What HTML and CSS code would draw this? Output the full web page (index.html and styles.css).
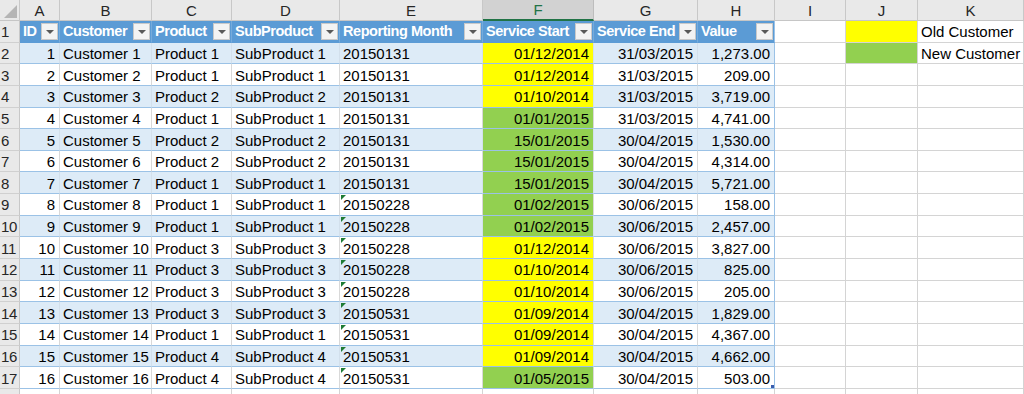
FILE: index.html
```html
<!DOCTYPE html>
<html>
<head>
<meta charset="utf-8">
<link rel="stylesheet" href="styles.css">
</head>
<body>
<div class="sheet">
  <div class="row colhdr">
    <div class="corner"></div>
    <div class="ch">A</div><div class="ch">B</div><div class="ch">C</div><div class="ch">D</div><div class="ch">E</div>
    <div class="ch sel">F</div><div class="ch">G</div><div class="ch">H</div><div class="ch">I</div><div class="ch">J</div><div class="ch">K</div>
  </div>

  <div class="row">
    <div class="rh">1</div>
    <div class="th">ID<span class="fb"></span></div>
    <div class="th">Customer<span class="fb"></span></div>
    <div class="th">Product<span class="fb"></span></div>
    <div class="th">SubProduct<span class="fb"></span></div>
    <div class="th">Reporting Month<span class="fb"></span></div>
    <div class="th">Service Start<span class="fb"></span></div>
    <div class="th">Service End<span class="fb"></span></div>
    <div class="th th-end">Value<span class="fb"></span></div>
    <div class="c"></div><div class="c yellow"></div><div class="c">Old Customer</div>
  </div>

  <div class="row band">
    <div class="rh">2</div>
    <div class="t r">1</div><div class="t">Customer 1</div><div class="t">Product 1</div><div class="t">SubProduct 1</div><div class="t">20150131</div>
    <div class="t r yellow">01/12/2014</div><div class="t r">31/03/2015</div><div class="t r t-end">1,273.00</div>
    <div class="c"></div><div class="c green"></div><div class="c">New Customer</div>
  </div>
  <div class="row">
    <div class="rh">3</div>
    <div class="t r">2</div><div class="t">Customer 2</div><div class="t">Product 1</div><div class="t">SubProduct 1</div><div class="t">20150131</div>
    <div class="t r yellow">01/12/2014</div><div class="t r">31/03/2015</div><div class="t r t-end">209.00</div>
    <div class="c"></div><div class="c"></div><div class="c"></div>
  </div>
  <div class="row band">
    <div class="rh">4</div>
    <div class="t r">3</div><div class="t">Customer 3</div><div class="t">Product 2</div><div class="t">SubProduct 2</div><div class="t">20150131</div>
    <div class="t r yellow">01/10/2014</div><div class="t r">31/03/2015</div><div class="t r t-end">3,719.00</div>
    <div class="c"></div><div class="c"></div><div class="c"></div>
  </div>
  <div class="row">
    <div class="rh">5</div>
    <div class="t r">4</div><div class="t">Customer 4</div><div class="t">Product 1</div><div class="t">SubProduct 1</div><div class="t">20150131</div>
    <div class="t r green">01/01/2015</div><div class="t r">31/03/2015</div><div class="t r t-end">4,741.00</div>
    <div class="c"></div><div class="c"></div><div class="c"></div>
  </div>
  <div class="row band">
    <div class="rh">6</div>
    <div class="t r">5</div><div class="t">Customer 5</div><div class="t">Product 2</div><div class="t">SubProduct 2</div><div class="t">20150131</div>
    <div class="t r green">15/01/2015</div><div class="t r">30/04/2015</div><div class="t r t-end">1,530.00</div>
    <div class="c"></div><div class="c"></div><div class="c"></div>
  </div>
  <div class="row">
    <div class="rh">7</div>
    <div class="t r">6</div><div class="t">Customer 6</div><div class="t">Product 2</div><div class="t">SubProduct 2</div><div class="t">20150131</div>
    <div class="t r green">15/01/2015</div><div class="t r">30/04/2015</div><div class="t r t-end">4,314.00</div>
    <div class="c"></div><div class="c"></div><div class="c"></div>
  </div>
  <div class="row band">
    <div class="rh">8</div>
    <div class="t r">7</div><div class="t">Customer 7</div><div class="t">Product 1</div><div class="t">SubProduct 1</div><div class="t">20150131</div>
    <div class="t r green">15/01/2015</div><div class="t r">30/04/2015</div><div class="t r t-end">5,721.00</div>
    <div class="c"></div><div class="c"></div><div class="c"></div>
  </div>
  <div class="row">
    <div class="rh">9</div>
    <div class="t r">8</div><div class="t">Customer 8</div><div class="t">Product 1</div><div class="t">SubProduct 1</div><div class="t txt">20150228</div>
    <div class="t r green">01/02/2015</div><div class="t r">30/06/2015</div><div class="t r t-end">158.00</div>
    <div class="c"></div><div class="c"></div><div class="c"></div>
  </div>
  <div class="row band">
    <div class="rh">10</div>
    <div class="t r">9</div><div class="t">Customer 9</div><div class="t">Product 1</div><div class="t">SubProduct 1</div><div class="t txt">20150228</div>
    <div class="t r green">01/02/2015</div><div class="t r">30/06/2015</div><div class="t r t-end">2,457.00</div>
    <div class="c"></div><div class="c"></div><div class="c"></div>
  </div>
  <div class="row">
    <div class="rh">11</div>
    <div class="t r">10</div><div class="t">Customer 10</div><div class="t">Product 3</div><div class="t">SubProduct 3</div><div class="t txt">20150228</div>
    <div class="t r yellow">01/12/2014</div><div class="t r">30/06/2015</div><div class="t r t-end">3,827.00</div>
    <div class="c"></div><div class="c"></div><div class="c"></div>
  </div>
  <div class="row band">
    <div class="rh">12</div>
    <div class="t r">11</div><div class="t">Customer 11</div><div class="t">Product 3</div><div class="t">SubProduct 3</div><div class="t txt">20150228</div>
    <div class="t r yellow">01/10/2014</div><div class="t r">30/06/2015</div><div class="t r t-end">825.00</div>
    <div class="c"></div><div class="c"></div><div class="c"></div>
  </div>
  <div class="row">
    <div class="rh">13</div>
    <div class="t r">12</div><div class="t">Customer 12</div><div class="t">Product 3</div><div class="t">SubProduct 3</div><div class="t txt">20150228</div>
    <div class="t r yellow">01/10/2014</div><div class="t r">30/06/2015</div><div class="t r t-end">205.00</div>
    <div class="c"></div><div class="c"></div><div class="c"></div>
  </div>
  <div class="row band">
    <div class="rh">14</div>
    <div class="t r">13</div><div class="t">Customer 13</div><div class="t">Product 3</div><div class="t">SubProduct 3</div><div class="t txt">20150531</div>
    <div class="t r yellow">01/09/2014</div><div class="t r">30/04/2015</div><div class="t r t-end">1,829.00</div>
    <div class="c"></div><div class="c"></div><div class="c"></div>
  </div>
  <div class="row">
    <div class="rh">15</div>
    <div class="t r">14</div><div class="t">Customer 14</div><div class="t">Product 1</div><div class="t">SubProduct 1</div><div class="t txt">20150531</div>
    <div class="t r yellow">01/09/2014</div><div class="t r">30/04/2015</div><div class="t r t-end">4,367.00</div>
    <div class="c"></div><div class="c"></div><div class="c"></div>
  </div>
  <div class="row band">
    <div class="rh">16</div>
    <div class="t r">15</div><div class="t">Customer 15</div><div class="t">Product 4</div><div class="t">SubProduct 4</div><div class="t txt">20150531</div>
    <div class="t r yellow">01/09/2014</div><div class="t r">30/04/2015</div><div class="t r t-end">4,662.00</div>
    <div class="c"></div><div class="c"></div><div class="c"></div>
  </div>
  <div class="row last">
    <div class="rh">17</div>
    <div class="t r">16</div><div class="t">Customer 16</div><div class="t">Product 4</div><div class="t">SubProduct 4</div><div class="t txt">20150531</div>
    <div class="t r green">01/05/2015</div><div class="t r">30/04/2015</div><div class="t r t-end handle">503.00</div>
    <div class="c"></div><div class="c"></div><div class="c"></div>
  </div>
  <div class="row">
    <div class="rh">18</div>
    <div class="c"></div><div class="c"></div><div class="c"></div><div class="c"></div><div class="c"></div>
    <div class="c"></div><div class="c"></div><div class="c"></div><div class="c"></div><div class="c"></div><div class="c"></div>
  </div>
</div>
</body>
</html>
```

FILE: styles.css
```css
* { box-sizing: border-box; }
html, body {
  margin: 0;
  padding: 0;
  background: #ffffff;
  overflow: hidden;
}
body {
  font-family: "Liberation Sans", Arial, sans-serif;
  font-size: 15px;
  color: #000;
  width: 1024px;
  height: 394px;
}
.sheet {
  display: flex;
  flex-direction: column;
}
.row {
  display: grid;
  grid-template-columns: 20px 40px 92px 80px 108px 143px 111px 104px 77px 71px 72px 1fr;
  height: 21.65px;
}
.row > div {
  border-right: 1px solid #d4d4d4;
  border-bottom: 1px solid #d4d4d4;
  white-space: nowrap;
  overflow: hidden;
  display: flex;
  align-items: center;
  padding: 1px 3px 0 3px;
}

/* column headers */
.colhdr { height: 21px; }
.colhdr > div {
  background: #e9e9e9;
  border-right: 1px solid #c8c8c8;
  border-bottom: 1px solid #c6c6c6;
  justify-content: center;
  color: #262626;
  font-size: 15px;
  padding: 0;
}
.colhdr > .corner {
  position: relative;
  background: #e9e9e9;
}
.corner::after {
  content: "";
  position: absolute;
  right: 2px;
  bottom: 2px;
  width: 0;
  height: 0;
  border-left: 13px solid transparent;
  border-bottom: 13px solid #b5b5b5;
}
.colhdr > .sel {
  background: #d2d2d2;
  color: #217346;
  border-bottom: 2px solid #217346;
  border-right-color: #bdbdbd;
}

/* row headers */
.row > .rh {
  background: #e9e9e9;
  border-right: 1px solid #c8c8c8;
  border-bottom: 1px solid #d0d0d0;
  color: #262626;
  padding: 1px 0 0 1px;
  overflow: visible;
  letter-spacing: -0.3px;
}

/* table header */
.row > .th {
  background: #5b9bd5;
  color: #ffffff;
  font-weight: bold;
  font-size: 14.5px;
  letter-spacing: -0.45px;
  border-right: 1px solid #76abdb;
  border-bottom: 1px solid #5b9bd5;
  padding: 0 1px 0 3px;
}
.row > .th-end { border-right-color: #9bc2e6; }
.fb {
  margin-left: auto;
  flex: none;
  width: 17px;
  height: 17px;
  background: #f3f3f3;
  border: 1px solid #c9c9c9;
  position: relative;
}
.fb::after {
  content: "";
  position: absolute;
  left: 4px;
  top: 6px;
  border-left: 4px solid transparent;
  border-right: 4px solid transparent;
  border-top: 4px solid #595959;
}

/* table body */
.row > .t {
  background: #ffffff;
  border-bottom: 1px solid #9bc2e6;
  border-right: 1px solid #d9d9d9;
}
.band > .t {
  background: #ddebf7;
  border-right-color: #d3e0ec;
}
.row > .t-end { border-right-color: #9bc2e6; }
.r { justify-content: flex-end; }
.row > .r { padding-right: 4px; }

.row > .yellow { background: #ffff00; }
.row > .green { background: #92d050; }
.row > .c.yellow, .row > .c.green { border-right-color: #d4d4d4; }

.txt { position: relative; }
.txt::before {
  content: "";
  position: absolute;
  left: 1px;
  top: 1px;
  border-top: 5px solid #1e7b34;
  border-right: 5px solid transparent;
}
.handle { position: relative; }
.handle::after {
  content: "";
  position: absolute;
  right: -1px;
  bottom: -1px;
  width: 4px;
  height: 4px;
  background: #3b5dad;
}
```
